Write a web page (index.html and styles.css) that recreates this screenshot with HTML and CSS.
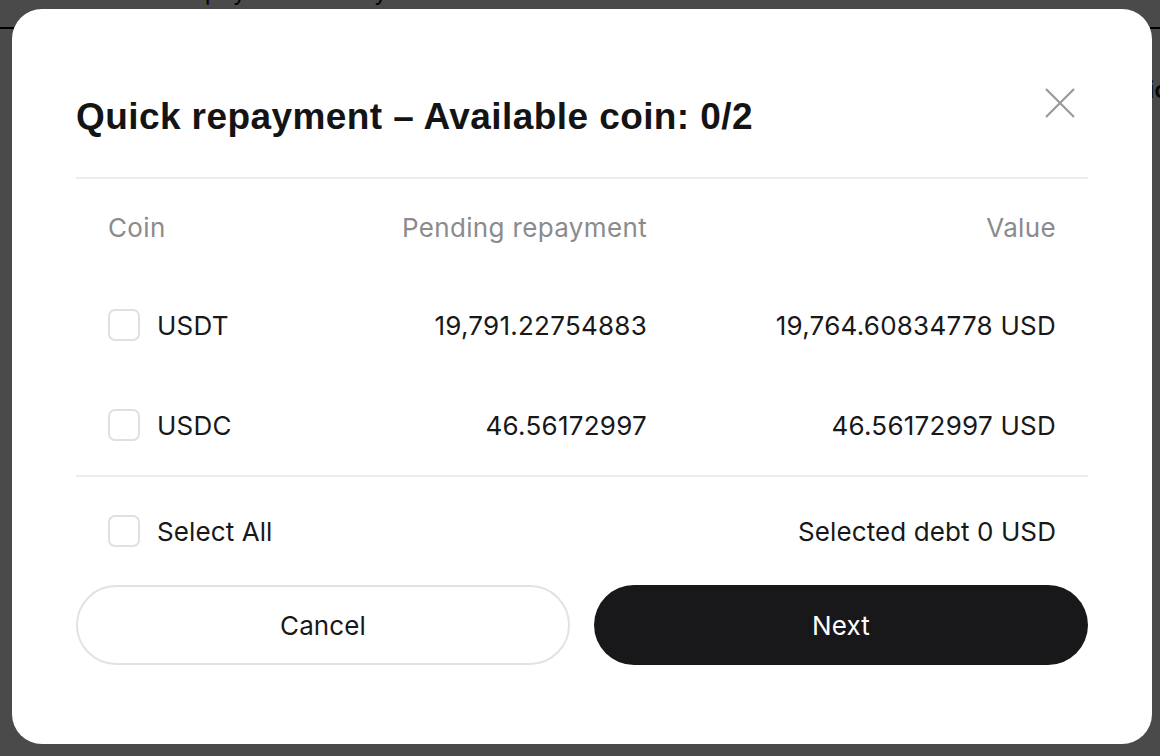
FILE: index.html
```html
<!DOCTYPE html>
<html lang="en">
<head>
<meta charset="utf-8">
<title>Quick repayment</title>
<link rel="stylesheet" href="styles.css">
</head>
<body>
<div class="page">
  <div class="page-top">
    <span class="page-crumb">Loan records &nbsp; Repayment history</span>
  </div>
  <div class="page-side">Quick</div>
</div>
<div class="overlay"></div>
<div class="modal" role="dialog">
  <button class="close" aria-label="Close">
    <svg width="30" height="30" viewBox="0 0 30 30"><path d="M1 1 L29 29 M29 1 L1 29" stroke="#999" stroke-width="2.2" fill="none"/></svg>
  </button>
  <div class="modal-head">
    <h1 class="title">Quick repayment – Available coin: 0/2</h1>
  </div>
  <div class="table">
    <div class="row head">
      <div class="c1">Coin</div>
      <div class="c2">Pending repayment</div>
      <div class="c3">Value</div>
    </div>
    <div class="row item">
      <div class="c1"><span class="check"></span>USDT</div>
      <div class="c2">19,791.22754883</div>
      <div class="c3">19,764.60834778 USD</div>
    </div>
    <div class="row item">
      <div class="c1"><span class="check"></span>USDC</div>
      <div class="c2">46.56172997</div>
      <div class="c3">46.56172997 USD</div>
    </div>
  </div>
  <div class="summary">
    <div class="c1"><span class="check"></span>Select All</div>
    <div class="debt">Selected debt 0 USD</div>
  </div>
  <div class="actions">
    <button class="btn btn-ghost">Cancel</button>
    <button class="btn btn-dark">Next</button>
  </div>
</div>
</body>
</html>
```

FILE: styles.css
```css
* { box-sizing: border-box; }
html, body { margin: 0; padding: 0; }
body {
  width: 1160px;
  height: 756px;
  overflow: hidden;
  background: #ffffff;
  font-family: Inter, "Liberation Sans", Arial, sans-serif;
  color: #18181a;
  position: relative;
}
.page { height: 756px; }
.page-top {
  height: 29px;
  border-bottom: 2px solid #000;
  overflow: hidden;
}
.page-crumb {
  display: block;
  margin-top: -22px;
  padding-left: 6px;
  font-size: 24px;
  line-height: 28px;
  color: #111;
}
.page-side {
  text-align: right;
  margin-top: 46px;
  margin-right: -22px;
  font-size: 24px;
  line-height: 30px;
  font-weight: 600;
}
.overlay {
  position: absolute;
  inset: 0;
  background: rgba(0,0,0,0.71);
}
.modal {
  position: absolute;
  left: 12px;
  top: 9px;
  width: 1140px;
  height: 735px;
  background: #fff;
  border-radius: 30px;
  padding: 0 64px;
}
.close {
  position: absolute;
  top: 79px;
  right: 77px;
  width: 30px;
  height: 30px;
  padding: 0;
  border: 0;
  background: none;
  display: flex;
}
.modal-head {
  padding: 84px 0 36px;
  border-bottom: 2px solid #ececec;
}
.title {
  margin: 0;
  font-family: "Liberation Sans", Arial, sans-serif;
  font-weight: 700;
  font-size: 37px;
  line-height: 48px;
  letter-spacing: 0.42px;
  color: #141414;
}
.table { padding: 0 32px; }
.row {
  display: grid;
  grid-template-columns: 290px 249px 1fr;
  align-items: center;
  font-size: 26px;
  letter-spacing: 0.25px;
}
.row.head { height: 96px; color: #8b8b8d; letter-spacing: 0.35px; }
.row.item { height: 100px; }
.c1 { display: flex; align-items: center; }
.c2, .c3 { text-align: right; white-space: nowrap; }
.check {
  width: 32px;
  height: 32px;
  border: 2px solid #e0e0e0;
  border-radius: 7px;
  margin-right: 17px;
  flex: none;
}
.summary {
  border-top: 2px solid #ececec;
  height: 110px;
  padding: 0 32px;
  display: flex;
  align-items: center;
  justify-content: space-between;
  font-size: 26px;
  letter-spacing: 0.1px;
}
.actions {
  display: grid;
  grid-template-columns: 1fr 1fr;
  gap: 24px;
}
.btn {
  height: 80px;
  border-radius: 40px;
  font-family: Inter, "Liberation Sans", Arial, sans-serif;
  font-size: 26px;
  letter-spacing: 0.1px;
}
.btn-ghost {
  background: #fff;
  border: 2px solid #e2e2e2;
  color: #18181a;
}
.btn-dark {
  background: #18181a;
  border: 0;
  color: #fff;
}
```
